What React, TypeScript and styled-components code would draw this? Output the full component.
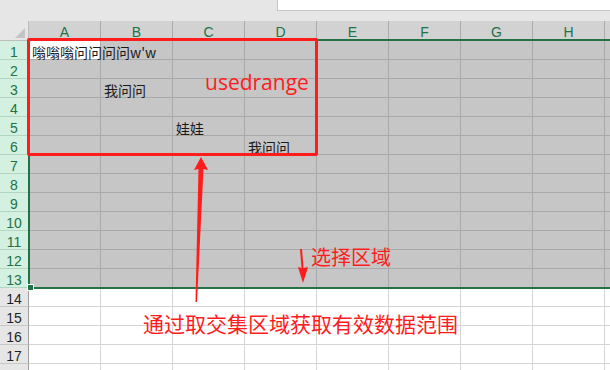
import styled, { createGlobalStyle } from 'styled-components';

const GlobalStyle = createGlobalStyle`
    html, body {
        margin: 0;
        padding: 0;
        background: #ffffff;
        overflow: hidden;
    }
`;

const cjk = `"Noto Sans CJK SC", "Noto Sans", sans-serif`;
const headFont = `"Liberation Sans", Arial, sans-serif`;

const green = '#217346';
const red = '#ff1c1c';

const COLS = ['A', 'B', 'C', 'D', 'E', 'F', 'G', 'H', ''];
const ROWS = 18;
const SELECTED_ROWS = 13;

// text content of the sheet: row -> col index -> value
const cells: Record<number, Record<number, string>> = {
    1: { 0: "嗡嗡嗡问问问问w'w" },
    3: { 1: '我问问' },
    5: { 2: '娃娃' },
    6: { 3: '我问问' },
};

const Page = styled.div`
    position: relative;
    width: 610px;
    height: 370px;
    overflow: hidden;
    background: #ffffff;
`;

const TopStrip = styled.div`
    height: 21px;
    background: #e6e6e6;
    display: flex;
    justify-content: flex-end;
    align-items: flex-start;
`;

const FormulaBox = styled.div`
    width: 332px;
    height: 10px;
    background: #ffffff;
    border-left: 1px solid #c6c6c6;
    border-bottom: 1px solid #c6c6c6;
`;

const Sheet = styled.div`
    display: grid;
    grid-template-columns: 29px repeat(9, 72px);
    grid-template-rows: 20px repeat(${ROWS}, 19px);
    width: 610px;
    overflow: hidden;
`;

const Corner = styled.div`
    position: relative;
    box-sizing: border-box;
    background: #e6e6e6;
    border-right: 1px solid #bdbdbd;
    border-bottom: 1px solid #bdbdbd;
`;

const CornerTriangle = styled.div`
    position: absolute;
    right: 3px;
    bottom: 2px;
    width: 0;
    height: 0;
    border-left: 10px solid transparent;
    border-bottom: 10px solid #c4c4c4;
`;

const ColHead = styled.div`
    box-sizing: border-box;
    background: #d2d2d2;
    border-right: 1px solid #ababab;
    border-bottom: 1px solid #ababab;
    color: ${green};
    font: 14px/22px ${headFont};
    text-align: center;
    overflow: hidden;
`;

const RowHead = styled.div<{ $sel: boolean }>`
    box-sizing: border-box;
    background: ${p => (p.$sel ? '#d3f0e0' : '#e6e6e6')};
    border-right: 1px solid ${p => (p.$sel ? '#9fc4b0' : '#9c9c9c')};
    border-bottom: 1px solid ${p => (p.$sel ? '#b3d6c3' : '#c8c8c8')};
    color: ${p => (p.$sel ? green : '#1f1f1f')};
    font: 14px/22px ${headFont};
    text-align: center;
    overflow: hidden;
`;

const Cell = styled.div<{ $sel: boolean; $active?: boolean; $filled?: boolean }>`
    box-sizing: border-box;
    background: ${p => (p.$active ? '#ffffff' : p.$sel ? '#c6c6c6' : '#ffffff')};
    border-right: 1px solid ${p => (p.$sel ? '#a9a9a9' : '#d4d4d4')};
    border-bottom: 1px solid ${p => (p.$sel ? '#a9a9a9' : '#d4d4d4')};
    padding: 0 3px;
    font: 14px/22px ${cjk};
    color: #1a1a1a;
    white-space: nowrap;
    ${p => (p.$filled ? 'position: relative; z-index: 1;' : '')}
`;

// whole-row selection frame (rows 1-13)
const SelectionFrame = styled.div`
    position: absolute;
    left: 28px;
    top: 39px;
    width: 600px;
    height: 246px;
    border: 2px solid ${green};
    border-right: none;
    z-index: 2;
    pointer-events: none;
`;

const FillHandle = styled.div`
    position: absolute;
    left: 27px;
    top: 284px;
    width: 5px;
    height: 5px;
    background: ${green};
    border: 1px solid #ffffff;
    z-index: 3;
`;

const UsedRangeBox = styled.div`
    position: absolute;
    left: 27px;
    top: 38px;
    width: 291px;
    height: 118px;
    box-sizing: border-box;
    border: 3px solid ${red};
    border-radius: 2px;
    z-index: 4;
`;

const Note = styled.div<{ $x: number; $y: number; $size: number; $latin?: boolean }>`
    position: absolute;
    left: ${p => p.$x}px;
    top: ${p => p.$y}px;
    font-family: ${p => (p.$latin ? `"Open Sans", ${cjk}` : cjk)};
    font-size: ${p => p.$size}px;
    line-height: 1;
    color: ${red};
    white-space: nowrap;
    z-index: 5;
`;

const Arrows = styled.svg`
    position: absolute;
    left: 0;
    top: 0;
    z-index: 5;
    pointer-events: none;
`;

const App: React.FC = () => {
    const renderRow = (r: number) => {
        const sel = r <= SELECTED_ROWS;
        return [
            <RowHead key={`h${r}`} $sel={sel}>{r}</RowHead>,
            ...COLS.map((_, c) => {
                const text = cells[r]?.[c];
                return (
                    <Cell
                        key={`${r}-${c}`}
                        $sel={sel}
                        $active={r === 1 && c === 0}
                        $filled={!!text}
                    >
                        {text}
                    </Cell>
                );
            }),
        ];
    };

    return (
        <Page>
            <GlobalStyle />
            <TopStrip>
                <FormulaBox />
            </TopStrip>

            <Sheet>
                <Corner><CornerTriangle /></Corner>
                {COLS.map((c, i) => <ColHead key={i}>{c}</ColHead>)}
                {Array.from({ length: ROWS }, (_, i) => renderRow(i + 1))}
            </Sheet>

            <SelectionFrame />
            <FillHandle />
            <UsedRangeBox />

            <Note $x={205} $y={72} $size={21} $latin>usedrange</Note>
            <Note $x={311} $y={247} $size={20}>选择区域</Note>
            <Note $x={143} $y={313} $size={21}>通过取交集区域获取有效数据范围</Note>

            <Arrows width="610" height="370" viewBox="0 0 610 370">
                {/* long arrow pointing up to the used range */}
                <polygon
                    points="201,157 208,170 203.5,169 197,302 195.5,302 198.5,169 194,170"
                    fill={red}
                />
                {/* short arrow pointing down to the selection edge */}
                <polygon
                    points="300,249 302,249 303.5,268 308,267 303,283 298,267 301.5,268"
                    fill={red}
                />
            </Arrows>
        </Page>
    );
};

export default App;
